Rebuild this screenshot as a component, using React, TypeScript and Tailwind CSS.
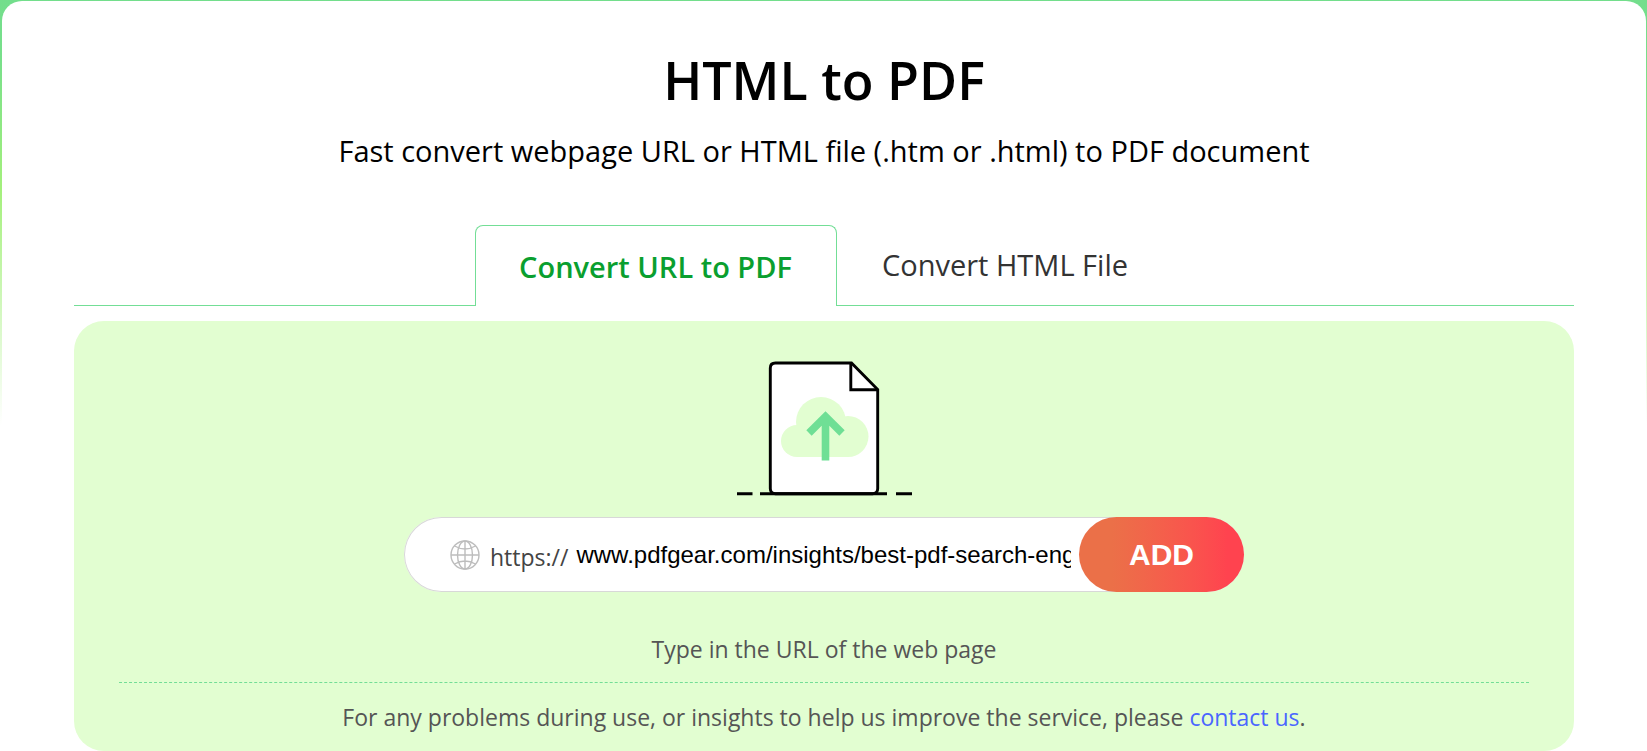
import React, { useState } from 'react';

type TabId = 'url' | 'file';

interface Tab {
  id: TabId;
  label: string;
  width: string;
}

const tabs: Tab[] = [
  { id: 'url', label: 'Convert URL to PDF', width: 'w-[362px]' },
  { id: 'file', label: 'Convert HTML File', width: 'w-[337px]' }
];

const UploadIllustration: React.FC = () => (
  <svg width="175" height="135" viewBox="17 21 175 135" fill="none" aria-hidden="true">
    <path
      d="M55.5 23H131.5L157.7 49.5V148.5Q157.7 153.7 152.5 153.7H55.5Q50.3 153.7 50.3 148.5V28Q50.3 23 55.5 23Z"
      fill="#fff"
      stroke="#000"
      strokeWidth="2.9"
    />
    <path d="M130.8 23V49.8H157.5" stroke="#000" strokeWidth="2.9" />
    <g fill="#e2fed1">
      <circle cx="101" cy="82" r="25" />
      <circle cx="128" cy="96.5" r="20.5" />
      <circle cx="77" cy="101" r="16" />
      <rect x="77" y="88" width="51" height="29" />
    </g>
    <path d="M105.5 120.5V76M89 93L105.5 76.5L122 93" stroke="#6fdf95" strokeWidth="7.6" />
    <path d="M17 153.8H32.5M40 153.8H167M176 153.8H192" stroke="#000" strokeWidth="2.9" />
  </svg>
);

const GlobeIcon: React.FC = () => (
  <svg className="shrink-0" width="30" height="30" viewBox="0 0 30 30" fill="none" stroke="#bdbdbd" strokeWidth="1.4" aria-hidden="true">
    <circle cx="15" cy="15" r="14" />
    <ellipse cx="15" cy="15" rx="7.5" ry="14" />
    <path d="M15 1V29M1 15H29M4.5 6Q15 12 25.5 6M4.5 24Q15 18 25.5 24" />
  </svg>
);

const App: React.FC = () => {
  const [active, setActive] = useState<TabId>('url');
  const [url, setUrl] = useState('www.pdfgear.com/insights/best-pdf-search-engine/');

  return (
    <div className="min-h-screen bg-[linear-gradient(to_bottom,#73de8c_0,#78e08a_60px,#a4f07c_190px,#ffffff_425px)] pt-px pl-0.5 pr-px font-['Segoe_UI','Open_Sans',sans-serif]">
      <main className="min-h-[750px] rounded-t-[20px] bg-white px-[72px] pt-[43px]">
        <header className="text-center text-black">
          <h1 className="text-[52px] leading-[72px] font-semibold">HTML to PDF</h1>
          <p className="mt-[15px] text-[29px] leading-10">
            Fast convert webpage URL or HTML file (.htm or .html) to PDF document
          </p>
        </header>

        {/* Tabs */}
        <div role="tablist" className="mt-[54px] flex h-[81px]">
          <span className="flex-1 border-b border-[#73de96]" />
          {tabs.map(tab => (
            <button
              key={tab.id}
              role="tab"
              aria-selected={active === tab.id}
              onClick={() => setActive(tab.id)}
              className={`${tab.width} whitespace-nowrap border-[#73de96] text-[29px] ${
                active === tab.id
                  ? 'rounded-t-lg border-x border-t pt-0.5 font-semibold text-[#0a9f2f]'
                  : 'border-b text-[#333]'
              }`}
            >
              {tab.label}
            </button>
          ))}
          <span className="flex-1 border-b border-[#73de96]" />
        </div>

        {/* Converter panel */}
        <section className="mt-[15px] flex flex-col items-center rounded-[30px] bg-[#e2fed1] px-[45px] pt-10 pb-[18px] text-[23px] leading-8 text-[#555]">
          <UploadIllustration />

          <form
            onSubmit={e => e.preventDefault()}
            className="mt-[21px] flex h-[75px] w-full max-w-[840px] items-center rounded-full bg-white pl-[46px] shadow-[inset_0_0_0_1px_#d8d8d8]"
          >
            <GlobeIcon />
            <label htmlFor="url" className="ml-2.5 pt-1 text-[#444]">https://</label>
            <input
              id="url"
              type="text"
              value={url}
              onChange={e => setUrl(e.target.value)}
              className="mx-2 min-w-0 flex-1 font-['Liberation_Sans',Arial,sans-serif] text-2xl text-black outline-none"
            />
            <button
              type="submit"
              className="h-full w-[165px] shrink-0 rounded-full bg-linear-to-r from-[#eb7048] from-20% to-[#ff434f] to-90% font-['Liberation_Sans',Arial,sans-serif] text-[30px] font-bold text-white"
            >
              ADD
            </button>
          </form>

          <p className="mt-[41px]">Type in the URL of the web page</p>
          <hr className="mt-[17px] w-full border-t border-dashed border-[#73de96]" />
          <p className="mt-[18px]">
            For any problems during use, or insights to help us improve the service, please{' '}
            <a href="#contact" className="text-[#4a66ff]">contact us</a>.
          </p>
        </section>
      </main>
    </div>
  );
};

export default App;
